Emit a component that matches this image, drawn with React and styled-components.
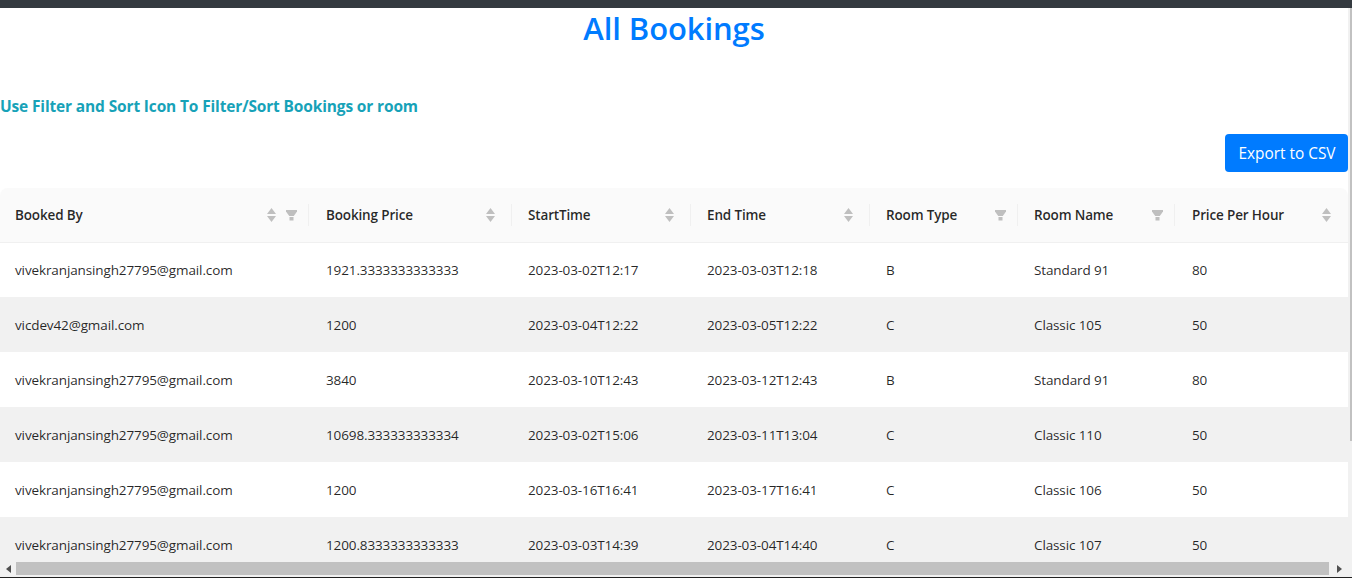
import React from "react";
import styled, { createGlobalStyle } from "styled-components";

const GlobalStyle = createGlobalStyle`
  html, body {
    margin: 0;
    padding: 0;
    height: 100%;
    overflow: hidden;
    background: #fff;
  }
  body {
    font-family: "Open Sans", "Noto Sans", sans-serif;
    color: #212529;
  }
`;

const columns = [
  { label: "Booked By", width: 309, sort: true, filter: true },
  { label: "Booking Price", width: 203, sort: true },
  { label: "StartTime", width: 179, sort: true },
  { label: "End Time", width: 179, sort: true },
  { label: "Room Type", width: 148, filter: true },
  { label: "Room Name", width: 157, filter: true },
  { label: "Price Per Hour", width: 173, sort: true },
];

const rows = [
  ["vivekranjansingh27795@gmail.com", "1921.3333333333333", "2023-03-02T12:17", "2023-03-03T12:18", "B", "Standard 91", "80"],
  ["vicdev42@gmail.com", "1200", "2023-03-04T12:22", "2023-03-05T12:22", "C", "Classic 105", "50"],
  ["vivekranjansingh27795@gmail.com", "3840", "2023-03-10T12:43", "2023-03-12T12:43", "B", "Standard 91", "80"],
  ["vivekranjansingh27795@gmail.com", "10698.333333333334", "2023-03-02T15:06", "2023-03-11T13:04", "C", "Classic 110", "50"],
  ["vivekranjansingh27795@gmail.com", "1200", "2023-03-16T16:41", "2023-03-17T16:41", "C", "Classic 106", "50"],
  ["vivekranjansingh27795@gmail.com", "1200.8333333333333", "2023-03-03T14:39", "2023-03-04T14:40", "C", "Classic 107", "50"],
];

const Page = styled.div`
  height: 578px;
  display: flex;
  flex-direction: column;
  overflow: hidden;
`;
const TopBar = styled.div`
  height: 8px;
  flex: none;
  background: #343a40;
`;
const Main = styled.div`
  flex: 1;
  min-height: 0;
  display: flex;
`;
const Content = styled.div`
  flex: 1;
  min-width: 0;
  display: flex;
  flex-direction: column;
`;
const Title = styled.h2`
  margin: 0;
  height: 41px;
  line-height: 41px;
  text-align: center;
  font-size: 31px;
  font-weight: 600;
  letter-spacing: -0.1px;
  color: #007bff;
`;
const Hint = styled.h6`
  margin: 45px 0 0;
  height: 24px;
  line-height: 24px;
  font-size: 15.5px;
  font-weight: 700;
  letter-spacing: -0.15px;
  color: #17a2b8;
`;
const Actions = styled.div`
  display: flex;
  justify-content: flex-end;
  margin-top: 16px;
`;
const ExportButton = styled.button`
  width: 123px;
  height: 38px;
  padding: 0 0 0 1px;
  border: 0;
  border-radius: 4px;
  background: #007bff;
  color: #fff;
  font-family: inherit;
  font-size: 15.4px;
`;
const TableClip = styled.div`
  flex: 1;
  min-height: 0;
  margin-top: 16px;
  overflow: hidden;
`;
const Table = styled.table`
  width: 1348px;
  table-layout: fixed;
  border-collapse: separate;
  border-spacing: 0;
  font-size: 13.5px;
  letter-spacing: -0.12px;
`;
const HeadCell = styled.th`
  position: relative;
  height: 55px;
  padding: 0 16px 1px;
  box-sizing: border-box;
  background: #fafafa;
  border-bottom: 1px solid #f0f0f0;
  text-align: left;
  font-weight: 600;
  letter-spacing: -0.15px;
  color: rgba(0, 0, 0, 0.85);
  &:first-child { border-top-left-radius: 8px; padding-left: 15px; }
  &:last-child { border-top-right-radius: 8px; }
  &:nth-child(2), &:nth-child(7) { padding-left: 17px; }
  &:not(:last-child)::after {
    content: "";
    position: absolute;
    top: 16px;
    right: 0;
    width: 1px;
    height: 22px;
    background: #f0f0f0;
  }
`;
const HeadInner = styled.div`
  display: flex;
  align-items: center;
`;
const HeadLabel = styled.span`
  flex: 1;
`;
const Icons = styled.span`
  display: flex;
  align-items: center;
  gap: 10px;
  margin-right: ${(props) => (props.$sortOnly ? "1px" : "-4px")};
`;
const Row = styled.tr`
  background: ${(props) => (props.$striped ? "#f1f1f1" : "#fff")};
  &:first-child td { height: 54px; }
`;
const Cell = styled.td`
  height: 55px;
  padding: 0 16px;
  box-sizing: border-box;
  color: rgba(0, 0, 0, 0.85);
  &:first-child { padding-left: 15px; }
  &:nth-child(2), &:nth-child(7) { padding-left: 17px; }
`;
const VerticalTrack = styled.div`
  width: 4px;
  flex: none;
  display: flex;
  justify-content: flex-end;
  background: #f1f1f1;
`;
const VerticalThumb = styled.div`
  width: 2px;
  height: 433px;
  background: #c1c1c1;
`;
const ScrollBar = styled.div`
  height: 16px;
  flex: none;
  display: flex;
  align-items: center;
  background: #f1f1f1;
  border-bottom: 1px solid #222;
`;
const Arrow = styled.span`
  width: 16px;
  flex: none;
  display: flex;
  justify-content: center;
`;
const Thumb = styled.div`
  flex: 1;
  height: 13px;
  align-self: flex-start;
  margin: 1px 3px 0 0;
  background: #c1c1c1;
`;
const Corner = styled.div`
  width: 4px;
  flex: none;
`;

const SortIcon = () => (
  <svg width="9" height="14" viewBox="0 0 9 14" fill="#bfbfbf">
    <path d="M4.5 0 9 6H0Z" />
    <path d="M4.5 14 0 8H9Z" />
  </svg>
);

const FilterIcon = () => (
  <svg width="11" height="13" viewBox="0 0 11 13" fill="#bfbfbf">
    <path d="M0 2H11V3.5L7.8 8H3.2L0 3.5Z" />
    <path d="M3.5 9H7.5V12.5H3.5Z" />
  </svg>
);

const App = () => (
  <>
    <GlobalStyle />
    <Page>
      <TopBar />
      <Main>
        <Content>
          <Title>All Bookings</Title>
          <Hint>Use Filter and Sort Icon To Filter/Sort Bookings or room</Hint>
          <Actions>
            <ExportButton>Export to CSV</ExportButton>
          </Actions>
          <TableClip>
            <Table>
              <colgroup>
                {columns.map((col) => (
                  <col key={col.label} style={{ width: col.width }} />
                ))}
              </colgroup>
              <thead>
                <tr>
                  {columns.map((col) => (
                    <HeadCell key={col.label}>
                      <HeadInner>
                        <HeadLabel>{col.label}</HeadLabel>
                        <Icons $sortOnly={col.sort && !col.filter}>
                          {col.sort && <SortIcon />}
                          {col.filter && <FilterIcon />}
                        </Icons>
                      </HeadInner>
                    </HeadCell>
                  ))}
                </tr>
              </thead>
              <tbody>
                {rows.map((row, i) => (
                  <Row key={i} $striped={i % 2 === 1}>
                    {row.map((value, j) => (
                      <Cell key={j}>{value}</Cell>
                    ))}
                  </Row>
                ))}
              </tbody>
            </Table>
          </TableClip>
        </Content>
        <VerticalTrack>
          <VerticalThumb />
        </VerticalTrack>
      </Main>
      <ScrollBar>
        <Arrow>
          <svg width="6" height="8" viewBox="0 0 6 8" fill="#505050"><path d="M6 0V8L1 4Z" /></svg>
        </Arrow>
        <Thumb />
        <Arrow>
          <svg width="6" height="8" viewBox="0 0 6 8" fill="#505050"><path d="M0 0V8L5 4Z" /></svg>
        </Arrow>
        <Corner />
      </ScrollBar>
    </Page>
  </>
);

export default App;
